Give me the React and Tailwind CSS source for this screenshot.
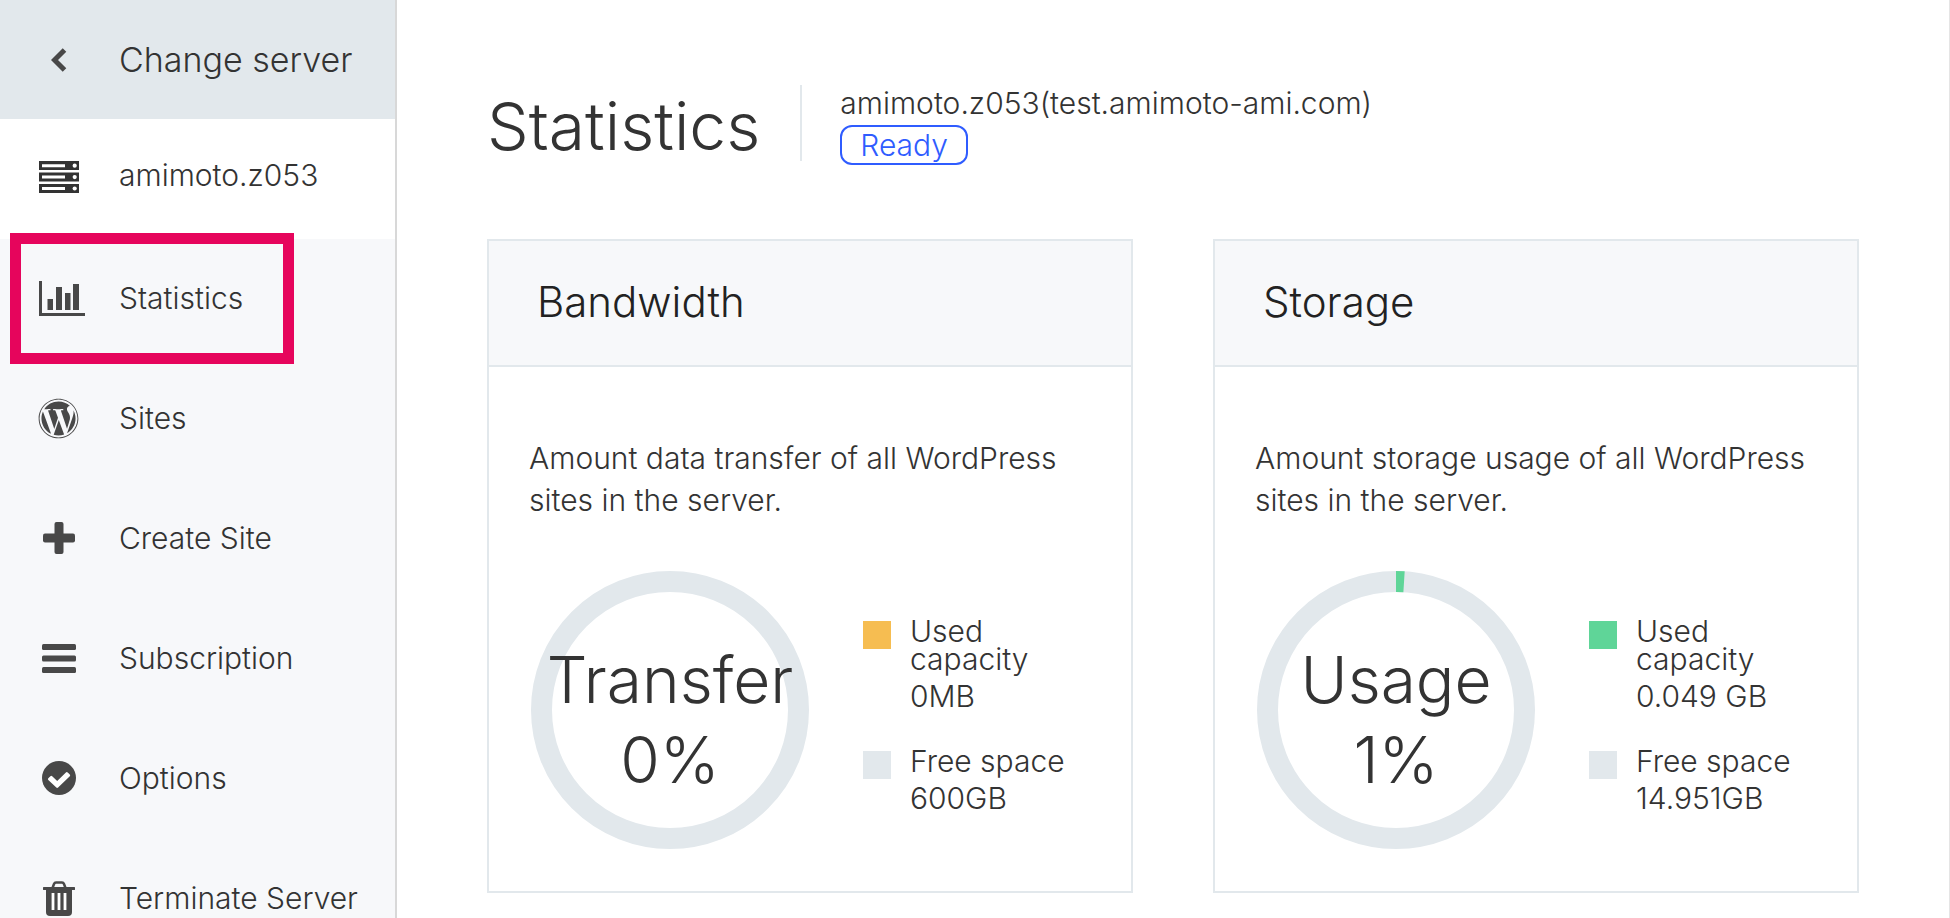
import React from 'react';
import { FaWordpress } from 'react-icons/fa';

const icons = {
  server: (
    <svg width="40" height="32" viewBox="0 0 40 32">
      <path d="M0 0h40v9H0zM0 11.500h40v9H0zM0 23h40v9H0z" fill="#333333" />
      <path d="M3 3.200h23v3H3zM3 14.600h23v3H3zM3 26h23v3H3z" fill="#fff" />
      <circle cx="35.700" cy="4.700" r="2.100" fill="#fff" />
      <circle cx="35.700" cy="16.100" r="2.100" fill="#fff" />
      <circle cx="35.700" cy="27.500" r="2.100" fill="#fff" />
    </svg>
  ),
  chart: (
    <svg width="46" height="35" viewBox="0 0 46 35" fill="#484848">
      <path d="M0 0h3v32h43v3H0zM8.500 18H14v11H8.500zM17 6h6v23h-6zM26 12h5.500v17H26zM34 3h6v26h-6z" />
    </svg>
  ),
  wordpress: <FaWordpress size={41} color="#484848" />,
  plus: (
    <svg width="32" height="32" viewBox="0 0 32 32" fill="#484848">
      <rect x="0" y="11.500" width="32" height="9" rx="2" />
      <rect x="11.500" y="0" width="9" height="32" rx="2" />
    </svg>
  ),
  bars: (
    <svg width="34" height="29" viewBox="0 0 34 29" fill="#484848">
      <rect width="34" height="6" rx="1.500" />
      <rect y="11.500" width="34" height="6" rx="1.500" />
      <rect y="23" width="34" height="6" rx="1.500" />
    </svg>
  ),
  check: (
    <svg width="34" height="34" viewBox="0 0 34 34">
      <circle cx="17" cy="17" r="17" fill="#484848" />
      <path
        d="M6.300 17.300l2.100-2.100q.9-.8 1.800 0l5 4.900 8.700-8.700q.9-.8 1.800 0l2.100 2.100q.8.900 0 1.800L16.100 26.500q-.9.800-1.800 0l-8-7.400q-.8-.9 0-1.800z"
        fill="#fff"
      />
    </svg>
  ),
  trash: (
    <svg width="32" height="35" viewBox="0 0 32 35">
      <path d="M1 7.500h30" stroke="#484848" strokeWidth="3" strokeLinecap="round" />
      <path d="M9.500 7l1.500-4q.6-1.500 2-1.500h6q1.400 0 2 1.500l1.500 4" fill="none" stroke="#484848" strokeWidth="2.500" />
      <path d="M3 8h26v23q0 4-4 4H7q-4 0-4-4z" fill="#484848" />
      <path d="M10 12v17M16 12v17M22 12v17" stroke="#fff" strokeWidth="2.800" />
    </svg>
  ),
};

const menu = [
  { label: 'Statistics', icon: icons.chart, marked: true },
  { label: 'Sites', icon: icons.wordpress },
  { label: 'Create Site', icon: icons.plus },
  { label: 'Subscription', icon: icons.bars },
  { label: 'Options', icon: icons.check },
  { label: 'Terminate Server', icon: icons.trash },
];

const cards = [
  {
    title: 'Bandwidth',
    text: 'Amount data transfer of all WordPress sites in the server.',
    name: 'Transfer',
    percent: 0,
    color: '#f6bd51',
    used: '0MB',
    free: '600GB',
  },
  {
    title: 'Storage',
    text: 'Amount storage usage of all WordPress sites in the server.',
    name: 'Usage',
    percent: 1,
    color: '#5fd598',
    used: '0.049 GB',
    free: '14.951GB',
  },
];

function Ring({ percent, color, name }) {
  const length = 2 * Math.PI * 128.5;

  return (
    <div className="relative w-[278px] h-[278px] shrink-0">
      <svg width="278" height="278" viewBox="0 0 278 278" fill="none" strokeWidth="21">
        <circle cx="139" cy="139" r="128.500" stroke="#e2e8ec" />
        {percent > 0 && (
          <circle
            cx="139"
            cy="139"
            r="128.500"
            stroke={color}
            strokeDasharray={`${(length * percent) / 100} ${length}`}
            transform="rotate(-90 139 139)"
          />
        )}
      </svg>
      <div className="absolute inset-0 flex flex-col items-center justify-center pt-5 text-[64px] leading-[80px]">
        <span>{name}</span>
        <span>{percent}%</span>
      </div>
    </div>
  );
}

function Legend({ color, label, value }) {
  return (
    <div className="flex gap-[19px]">
      <span className="mt-1 w-7 h-7 shrink-0" style={{ backgroundColor: color }} />
      <dl>
        <dt className="leading-7">{label}</dt>
        <dd className="leading-[46px]">{value}</dd>
      </dl>
    </div>
  );
}

function Card({ card }) {
  return (
    <section className="border-2 border-[#e2e8ec]">
      <h2 className="flex items-center h-[126px] px-12 pb-1 border-b-2 border-[#e2e8ec] bg-[#f7f8fa] text-[42px] text-[#222222]">
        {card.title}
      </h2>
      <div className="px-10 pt-[70px] pb-[42px]">
        <p className="leading-[42px]">{card.text}</p>
        <div className="flex items-center gap-[54px] mt-[50px] pl-0.5">
          <Ring percent={card.percent} color={card.color} name={card.name} />
          <div className="flex flex-col gap-7 pt-[18px]">
            <Legend color={card.color} label="Used capacity" value={card.used} />
            <Legend color="#e2e8ec" label="Free space" value={card.free} />
          </div>
        </div>
      </div>
    </section>
  );
}

function App() {
  return (
    <div className="flex h-screen overflow-hidden bg-white font-['Inter',sans-serif] font-light text-[30px] text-[#333333]">
      <nav className="w-[397px] shrink-0 border-r-2 border-[#d8d8d8] bg-[#f7f8fa]">
        <a href="#servers" className="flex items-center h-[119px] bg-[#e2e8ec] text-[34px]">
          <span className="flex justify-center w-[119px] pr-0.5">
            <svg width="16" height="24" viewBox="0 0 16 24" fill="none" stroke="#484848" strokeWidth="5">
              <path d="M13.500 2L3.500 12l10 10" />
            </svg>
          </span>
          Change server
        </a>
        <a href="#server" className="flex items-center h-[120px] pb-1 bg-white">
          <span className="w-[119px] pl-[39px]">{icons.server}</span>
          <span className="pb-1">amimoto.z053</span>
        </a>
        {menu.map((item) => (
          <a key={item.label} href="#menu" className="relative flex items-center h-[120px] pb-0.5 whitespace-nowrap">
            {item.marked ? (
              <span className="w-[119px] pl-[39px]">{item.icon}</span>
            ) : (
              <span className="flex justify-center w-[119px] pr-0.5">{item.icon}</span>
            )}
            {item.label}
            {item.marked && (
              <span className="absolute -top-[6px] left-[10px] w-[284px] h-[131px] border-[11px] border-[#e6055c]" />
            )}
          </a>
        ))}
      </nav>

      <main className="flex-1 px-[90px] pt-[85px] border-r border-[#e5e5e5]">
        <header className="flex items-start">
          <h1 className="h-[76px] pr-10 border-r-2 border-[#e2e8ec] text-[66px] leading-[82px]">Statistics</h1>
          <div className="pl-[38px]">
            <p className="-mt-0.5 mb-0.5 leading-10">amimoto.z053(test.amimoto-ami.com)</p>
            <p className="w-fit px-[18px] border-2 border-[#2f5cff] rounded-xl leading-9 text-[#2f5cff]">Ready</p>
          </div>
        </header>
        <div className="grid grid-cols-2 gap-20 mt-[74px]">
          {cards.map((card) => (
            <Card key={card.title} card={card} />
          ))}
        </div>
      </main>
    </div>
  );
}

export default App;
